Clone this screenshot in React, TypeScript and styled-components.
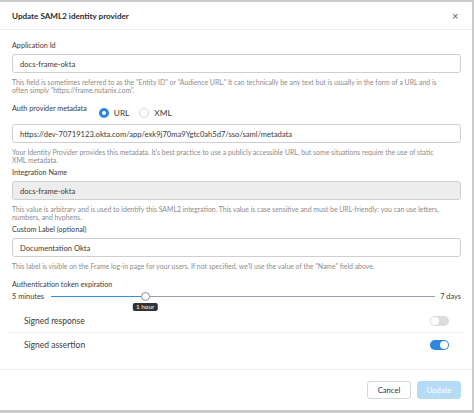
import React from "react";
import styled, { createGlobalStyle } from "styled-components";

const GlobalStyle = createGlobalStyle`
  html, body {
    margin: 0;
    padding: 0;
    background: #cbcbcb;
    font-family: Lato, "Open Sans", sans-serif;
    -webkit-font-smoothing: antialiased;
  }
  * { box-sizing: border-box; }
`;

const Modal = styled.div`
  margin-top: 2px;
  width: 472px;
  height: 408px;
  background: #fff;
  display: flex;
  flex-direction: column;
`;

const Header = styled.div`
  height: 28px;
  border-bottom: 1px solid #ececec;
  display: flex;
  align-items: center;
  justify-content: space-between;
  padding: 0 13px 0 12px;
`;

const Title = styled.h2`
  margin: 0;
  font-size: 8.1px;
  font-weight: 700;
  color: #2b2b2b;
`;

const Close = styled.button`
  border: none;
  background: none;
  padding: 0;
  font-size: 9px;
  line-height: 10px;
  color: #555;
  cursor: pointer;
  font-family: "DejaVu Sans", sans-serif;
`;

const Body = styled.div`
  flex: 1;
  padding: 11px 11px 0 12px;
  display: flex;
  flex-direction: column;
`;

const Field = styled.div<{ $gap?: number }>`
  display: flex;
  flex-direction: column;
  margin-top: ${(p) => p.$gap ?? 0}px;
`;

const Label = styled.label`
  font-size: 7.2px;
  line-height: 10px;
  color: #3c3c3c;
  margin-bottom: 3px;
`;

const Input = styled.input<{ $disabled?: boolean }>`
  height: 19px;
  width: 100%;
  border: 1px solid #cfcfcf;
  border-radius: 3px;
  padding: 0 7px;
  font-family: Lato, sans-serif;
  font-size: 7.6px;
  color: #3a3a3a;
  background: ${(p) => (p.$disabled ? "#ededed" : "#fff")};
  outline: none;
`;

const Help = styled.p`
  margin: 5px 0 0;
  font-size: 6.9px;
  line-height: 8px;
  color: #8c8c8c;
  white-space: nowrap;
`;

const MetaRow = styled.div`
  display: flex;
  height: 18px;
  margin-bottom: 2px;
`;

const MetaLabel = styled(Label)`
  margin: 0;
  align-self: flex-start;
`;

const RadioGroup = styled.div`
  display: flex;
  align-items: center;
  gap: 10px;
  margin-left: 12px;
`;

const RadioOption = styled.label`
  display: flex;
  align-items: center;
  gap: 5px;
  font-size: 8.3px;
  color: #3a3a3a;
`;

const RadioDot = styled.span<{ $checked?: boolean }>`
  width: 10px;
  height: 10px;
  border-radius: 50%;
  border: ${(p) => (p.$checked ? "3px solid #2c87de" : "1px solid #d4d4d4")};
  background: #fff;
`;

const SliderLabel = styled(Label)`
  margin: 10px 0 1px;
`;

const SliderRow = styled.div`
  display: flex;
  align-items: center;
  height: 10px;
  font-size: 7.4px;
  color: #3c3c3c;
`;

const Track = styled.div`
  position: relative;
  flex: 1;
  height: 1px;
  margin: 0 5px 0 7px;
  background: #9c9cab;
`;

const Fill = styled.div`
  height: 1px;
  background: #3a8fdc;
`;

const Thumb = styled.div`
  position: absolute;
  top: -4px;
  width: 9px;
  height: 9px;
  margin-left: -4.5px;
  border-radius: 50%;
  border: 1px solid #8d8d99;
  background: #fff;
`;

const Tip = styled.div`
  position: absolute;
  top: 7px;
  transform: translateX(-50%);
  background: #333;
  color: #fff;
  font-size: 6.4px;
  line-height: 8px;
  padding: 0 3px;
  border-radius: 2px;
  white-space: nowrap;
`;

const ToggleList = styled.div`
  margin: 8px -2px 0 -5px;
`;

const ToggleRow = styled.div<{ $last?: boolean }>`
  height: 24px;
  display: flex;
  align-items: center;
  justify-content: space-between;
  padding: 0 14px 0 17px;
  border-bottom: ${(p) => (p.$last ? "none" : "1px solid #f0f0f0")};
  font-size: 8.5px;
  color: #3a3a3a;
`;

const Switch = styled.span<{ $on?: boolean }>`
  width: 19px;
  height: 10px;
  border-radius: 5px;
  background: ${(p) => (p.$on ? "#2c87de" : "#dcdcdc")};
  display: flex;
  align-items: center;
  justify-content: ${(p) => (p.$on ? "flex-end" : "flex-start")};
  padding: 1px;
  &::after {
    content: "";
    width: 8px;
    height: 8px;
    border-radius: 50%;
    background: #fff;
  }
`;

const Footer = styled.div`
  height: 41px;
  border-top: 1px solid #ececec;
  display: flex;
  align-items: center;
  justify-content: flex-end;
  gap: 6px;
  padding: 0 11px 0 12px;
`;

const Button = styled.button<{ $primary?: boolean }>`
  height: 18px;
  width: 44px;
  border-radius: 3px;
  font-family: Lato, sans-serif;
  font-size: 7.6px;
  border: 1px solid ${(p) => (p.$primary ? "#b6dbf7" : "#d6d6d6")};
  background: ${(p) => (p.$primary ? "#b6dbf7" : "#fff")};
  color: ${(p) => (p.$primary ? "#fff" : "#333")};
  padding: 0;
`;

export default function App() {
  const pos = 24.5;
  return (
    <>
      <GlobalStyle />
      <Modal>
        <Header>
          <Title>Update SAML2 identity provider</Title>
          <Close>×</Close>
        </Header>
        <Body>
          <Field>
            <Label>Application Id</Label>
            <Input defaultValue="docs-frame-okta" />
            <Help>
              This field is sometimes referred to as the "Entity ID" or "Audience URL." It can technically be any
              text but is usually in the form of a URL and is
              <br />
              often simply "https://frame.nutanix.com".
            </Help>
          </Field>
          <Field $gap={10}>
            <MetaRow>
              <MetaLabel>Auth provider metadata</MetaLabel>
              <RadioGroup>
                <RadioOption>
                  <RadioDot $checked />
                  URL
                </RadioOption>
                <RadioOption>
                  <RadioDot />
                  XML
                </RadioOption>
              </RadioGroup>
            </MetaRow>
            <Input defaultValue="https://dev-70719123.okta.com/app/exk9j70ma9Ygtc0ah5d7/sso/saml/metadata" />
            <Help>
              Your Identity Provider provides this metadata. It's best practice to use a publicly accessible URL,
              but some situations require the use of static
              <br />
              XML metadata.
            </Help>
          </Field>
          <Field $gap={4}>
            <Label>Integration Name</Label>
            <Input $disabled readOnly defaultValue="docs-frame-okta" />
            <Help>
              This value is arbitrary and is used to identify this SAML2 integration. This value is case sensitive
              and must be URL-friendly: you can use letters,
              <br />
              numbers, and hyphens.
            </Help>
          </Field>
          <Field $gap={4}>
            <Label>Custom Label (optional)</Label>
            <Input defaultValue="Documentation Okta" />
            <Help>
              This label is visible on the Frame log-in page for your users. If not specified, we'll use the value
              of the "Name" field above.
            </Help>
          </Field>
          <SliderLabel>Authentication token expiration</SliderLabel>
          <SliderRow>
            5 minutes
            <Track>
              <Fill style={{ width: `${pos}%` }} />
              <Thumb style={{ left: `${pos}%` }} />
              <Tip style={{ left: `${pos}%` }}>1 hour</Tip>
            </Track>
            7 days
          </SliderRow>
          <ToggleList>
            <ToggleRow>
              Signed response
              <Switch />
            </ToggleRow>
            <ToggleRow $last>
              Signed assertion
              <Switch $on />
            </ToggleRow>
          </ToggleList>
        </Body>
        <Footer>
          <Button>Cancel</Button>
          <Button $primary>Update</Button>
        </Footer>
      </Modal>
    </>
  );
}
